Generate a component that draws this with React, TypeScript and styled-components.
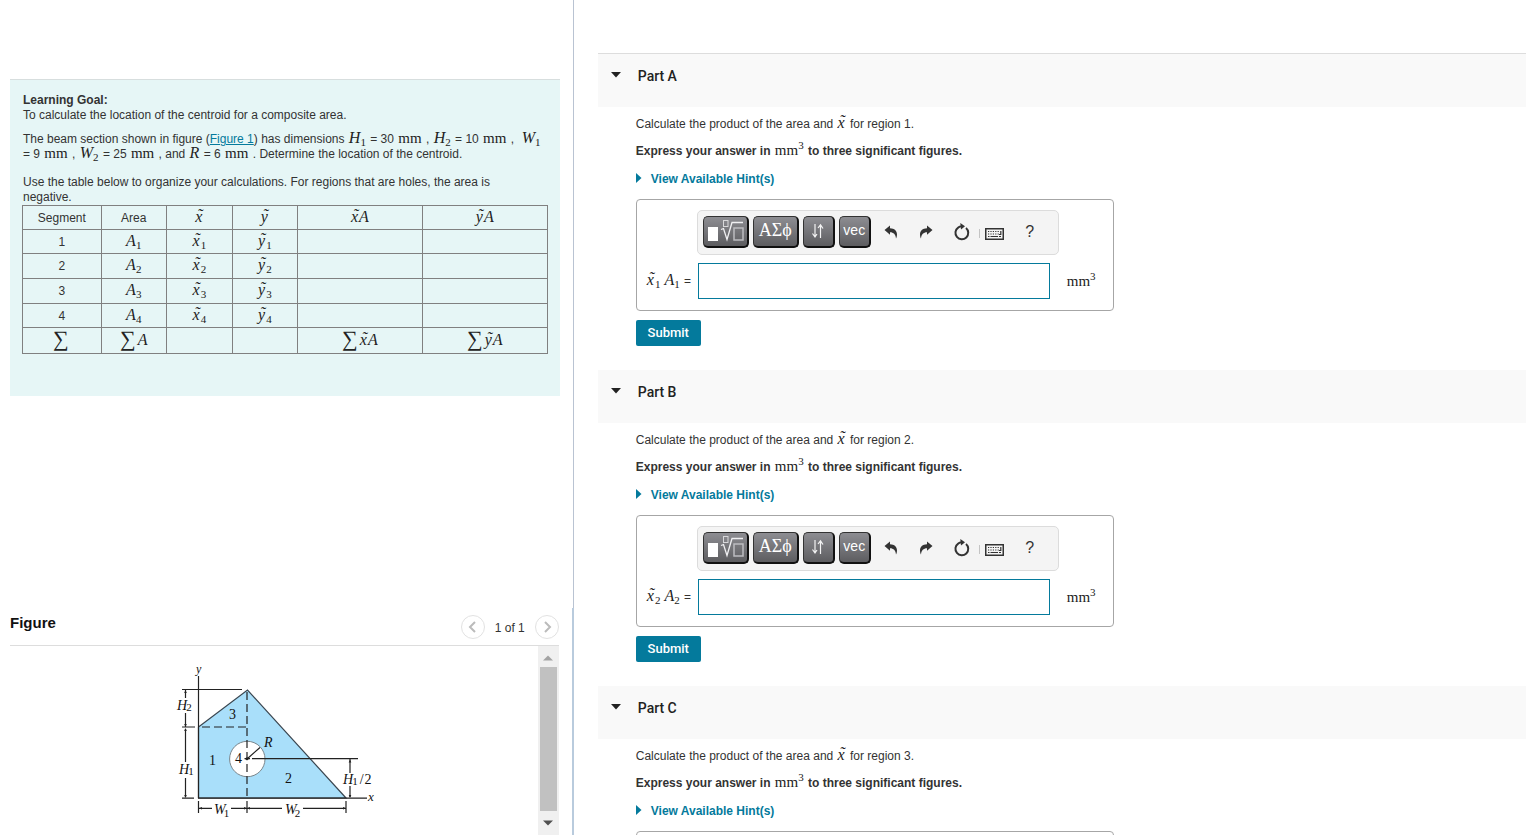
import React from "react";
import styled, { createGlobalStyle, css } from "styled-components";

const Global = createGlobalStyle`
  *, *::before, *::after { box-sizing: border-box; }
  body {
    margin: 0;
    background: #fff;
    color: #333;
    font: 12px/15px Arial, "Liberation Sans", sans-serif;
    overflow: hidden;
  }
  p, h2, h3 { margin: 0; }
  button, input { font-family: inherit; margin: 0; padding: 0; }
`;

const serif = `"Liberation Serif", "Times New Roman", serif`;

const Page = styled.div`
  display: grid;
  grid-template-columns: 37.6% 1fr;
  height: 100vh;
`;

/* ---------- math ---------- */

const Math = styled.span`
  margin: 0 1px;
  font-family: ${serif};
  font-size: 16px;
  line-height: 1px;
  font-weight: 400;
  color: #222;
  white-space: nowrap;
  sub, sup { font-size: 11px; line-height: 0; }
  sub { vertical-align: -3px; }
  sup { vertical-align: 6px; }
`;

const Unit = styled(Math)`
  font-size: 15px;
`;

const Sigma = styled.span`
  font-size: 22px;
  margin-right: 2px;
  vertical-align: -1px;
`;

const Tilde = styled.i`
  position: relative;
  margin-right: 1px;
  &::after {
    content: "˜";
    position: absolute;
    left: 2px;
    top: -2px;
    line-height: normal;
  }
`;

const X = () => <Tilde>x</Tilde>;
const Y = () => <Tilde>y</Tilde>;

/* ---------- left side ---------- */

const Aside = styled.aside`
  display: flex;
  flex-direction: column;
  min-height: 0;
`;

const Upper = styled.div`
  flex: 1;
  min-height: 0;
  padding: 79px 13px 0 10px;
  border-right: 1px solid #b9c3d2;
`;

const Goal = styled.section`
  padding: 13px 12px 42px;
  background: #e6f6f6;
  border-top: 1px solid #d7dede;
`;

const GoalTitle = styled.h2`
  font-size: 12px;
  line-height: 15px;
`;

const Para = styled.p<{ $gap: number; $inset?: number }>`
  padding-left: 1px;
  padding-right: ${(p) => p.$inset ?? 2}px;
  margin-top: ${(p) => p.$gap}px;
`;

const TextLink = styled.a`
  color: #047a9c;
  text-decoration: underline;
`;

const Table = styled.table`
  width: 100%;
  border-collapse: collapse;
  table-layout: fixed;
  th, td {
    height: 24px;
    padding: 0;
    border: 1px solid #808080;
    font-weight: 400;
    text-align: center;
    vertical-align: middle;
    line-height: 20px;
  }
  tr.tall td { height: 25px; }
  tr.total td { height: 26px; }
`;

const FigurePane = styled.section`
  height: 227px;
  display: flex;
  flex-direction: column;
  padding: 0 13px 0 10px;
  border-right: 2px solid #b9cbdd;
`;

const FigureHead = styled.header`
  height: 38px;
  display: flex;
  justify-content: space-between;
  border-bottom: 1px solid #ddd;
`;

const FigureTitle = styled.h2`
  font-size: 15px;
  line-height: 30px;
  color: #111;
`;

const Pager = styled.nav`
  display: flex;
  align-items: center;
  gap: 10px;
`;

const Round = styled.button`
  display: grid;
  place-items: center;
  width: 24px;
  height: 24px;
  border: 1px solid #e2e2e2;
  border-radius: 50%;
  background: #fff;
`;

const PageCount = styled.span`
  padding-top: 3px;
`;

const FigureBody = styled.div`
  flex: 1;
  display: flex;
  min-height: 0;
`;

const Drawing = styled.div`
  flex: 1;
  display: flex;
  justify-content: center;
  padding: 14px 0 0 2px;
`;

const ScrollTrack = styled.div`
  width: 21px;
  background: #f0f0f0;
  display: flex;
  flex-direction: column;
  align-items: center;
`;

const ScrollArrow = styled.span`
  height: 21px;
  padding-top: 2px;
  display: grid;
  place-items: center;
`;

const ScrollThumb = styled.div`
  width: 17px;
  height: 144px;
  background: #c1c1c1;
`;

const Chevron = ({ d }: { d: string }) => (
  <svg width="12" height="12" viewBox="0 0 12 12" fill="none" stroke="#bbb" strokeWidth="2">
    <path d={d} />
  </svg>
);

const BeamSection = () => (
  <svg width="210" height="165" viewBox="170 660 210 165" role="img" aria-label="Beam section">
    <path d="M198.5 727L247.5 690L346 798H198.5Z" fill="#a9dffa" stroke="#3a4650" strokeWidth="1.2" />
    <circle cx="247.3" cy="759" r="17.7" fill="#fff" stroke="#7b868c" />
    <g stroke="#222" fill="none" strokeWidth="1.2">
      <path d="M198.5 676V798" />
      <path d="M182 689.5H242M182 727H195M182 798.2H194M198 798.2H367" />
      <path d="M202 727H246" strokeDasharray="8 4" />
      <path d="M247 692V798" strokeDasharray="8 4" />
      <path d="M185.5 690V698M185.5 713V727M185.5 729V762M185.5 778V797" />
      <path d="M247 759L260 747.5M252 758.7H358M244.5 758.7H250" />
      <path d="M350 759V773M350 786V797" />
      <path d="M198.5 801V813M247 801V813M346 801V813" />
      <path d="M199 808.3H212M231 808.3H282M303 808.3H346" />
    </g>
    <g fill="#222">
      <path d="M185.5 690l-1.3 3h2.6zM185.5 727l-1.3-3h2.6zM185.5 728l-1.3 3h2.6zM185.5 798l-1.3-3h2.6z" />
      <path d="M350 759.5l-1.3 3h2.6zM350 798l-1.3-3h2.6z" />
      <path d="M199 808.3l3-1.3v2.6zM247 808.3l-3-1.3v2.6zM247 808.3l3-1.3v2.6zM346 808.3l-3-1.3v2.6z" />
      <circle cx="247" cy="758.7" r="1.5" />
    </g>
    <g fontFamily={serif} fontSize="14" fill="#111">
      <text x="196" y="673" fontStyle="italic" fontSize="12">y</text>
      <text x="368" y="801" fontStyle="italic" fontSize="13">x</text>
      <text x="177" y="710" fontStyle="italic">H<tspan fontStyle="normal" fontSize="11" dy="1" dx="-1">2</tspan></text>
      <text x="179" y="774" fontStyle="italic">H<tspan fontStyle="normal" fontSize="11" dy="1" dx="-1">1</tspan></text>
      <text x="343" y="784" fontStyle="italic">H<tspan fontStyle="normal" fontSize="11" dy="1" dx="-1">1</tspan><tspan fontStyle="normal" dy="-1" dx="2">/</tspan><tspan fontStyle="normal" dx="1">2</tspan></text>
      <text x="214" y="814" fontStyle="italic">W<tspan fontStyle="normal" fontSize="11" dy="3" dx="-2">1</tspan></text>
      <text x="285" y="814" fontStyle="italic">W<tspan fontStyle="normal" fontSize="11" dy="3" dx="-2">2</tspan></text>
      <text x="264" y="747" fontStyle="italic">R</text>
      <text x="209" y="765">1</text>
      <text x="285" y="783">2</text>
      <text x="229" y="719">3</text>
      <text x="235" y="763">4</text>
    </g>
  </svg>
);

/* ---------- right side ---------- */

const Main = styled.main`
  padding: 53px 0 0 24px;
  min-width: 0;
  overflow: hidden;
`;

const Parts = styled.div`
  border-top: 1px solid #ddd;
`;

const PartHead = styled.header`
  height: 53px;
  display: flex;
  align-items: flex-start;
  padding: 12px 13px;
  gap: 17px;
  background: #f9f9f9;
`;

const PartToggle = styled.button`
  width: 10px;
  height: 18px;
  border: 0;
  background: none;
  display: grid;
  place-items: center;
`;

const PartTitle = styled.h3`
  font-size: 14px;
  line-height: 20px;
  font-weight: 500;
  font-family: Roboto, Arial, sans-serif;
  color: #222;
`;

const PartBody = styled.div`
  padding: 10px 38px 24px;
`;

const Instruction = styled.p`
  margin-top: 12px;
  font-weight: 700;
`;

const Hints = styled.button`
  display: flex;
  align-items: center;
  gap: 9px;
  margin-top: 13px;
  border: 0;
  background: none;
  color: #047a9c;
  font-size: 12px;
  line-height: 15px;
  font-weight: 700;
  svg { margin-bottom: 3px; }
`;

const AnswerBox = styled.div`
  max-width: 478px;
  height: 112px;
  margin-top: 12px;
  padding: 10px;
  border: 1px solid #a6a6a6;
  border-radius: 4px;
`;

const Toolbar = styled.div`
  display: flex;
  align-items: center;
  width: 362px;
  height: 45px;
  margin-left: 50px;
  padding: 0 5px 2px;
  border: 1px solid #dcdcdc;
  border-radius: 5px;
  background: #f4f4f4;
`;

const DarkKeys = styled.div`
  display: flex;
  gap: 4px;
`;

const DarkKey = styled.button<{ $wide?: boolean; $serif?: boolean; $text?: boolean }>`
  display: grid;
  place-items: center;
  width: ${(p) => (p.$wide ? 46 : 32)}px;
  height: 32px;
  padding-bottom: ${(p) => (p.$text ? 3 : 0)}px;
  border: 1px solid #333;
  border-right: 2px solid #111;
  border-bottom: 2px solid #111;
  border-radius: 5px;
  background: linear-gradient(#8d8d92, #5d5d60);
  color: #fff;
  font-size: 14px;
  line-height: 16px;
  ${(p) =>
    p.$serif &&
    css`
      font-family: ${serif};
      font-size: 18px;
    `}
`;

const PlainKeys = styled.div`
  display: flex;
  align-items: center;
  margin-left: 12px;
`;

const PlainKey = styled.button<{ $width: number; $drop?: number }>`
  display: grid;
  place-items: center;
  width: ${(p) => p.$width}px;
  height: 32px;
  padding-top: ${(p) => p.$drop ?? 0}px;
  border: 0;
  background: none;
  color: #333;
  font-size: 16px;
`;

const Divider = styled.span`
  width: 1px;
  height: 9px;
  margin: 4px 0 0 10px;
  background: #c4c4c4;
`;

const AnswerRow = styled.div`
  display: flex;
  align-items: center;
  margin-top: 8px;
`;

const AnswerLabel = styled.label`
  width: 51px;
  margin-left: -1px;
  flex: none;
  white-space: nowrap;
`;

const AnswerInput = styled.input`
  width: 352px;
  height: 36px;
  margin-left: 1px;
  padding: 0 8px;
  border: 1px solid #047a9c;
  background: #fff;
  font-size: 16px;
`;

const AnswerUnit = styled(Unit)`
  margin: 0 0 4px 17px;
`;

const Submit = styled.button`
  display: block;
  width: 65px;
  height: 26px;
  margin-top: 9px;
  border: 0;
  border-radius: 2px;
  background: #047a9c;
  color: #fff;
  font: 500 13px/24px Roboto, Arial, sans-serif;
`;

const RootIcon = () => (
  <svg width="38" height="24" viewBox="0 0 38 24" fill="none">
    <rect x="2" y="8" width="10" height="14" fill="#fff" />
    <rect x="17.5" y="1.500" width="4.500" height="6" stroke="#d8d8da" />
    <path d="M15 10.500L17.500 9.500L21 20.500L26 3.500H37" stroke="#f0f0f2" strokeWidth="1.300" />
    <rect x="28" y="9" width="9" height="12" stroke="#bcbcc0" strokeWidth="1.500" />
  </svg>
);

const ArrowsIcon = () => (
  <svg width="14" height="16" viewBox="0 0 14 16" fill="none" stroke="#f4f4f4" strokeWidth="1.200">
    <path d="M4 1V14M1.500 10.500L4 14L6 11M9.500 15V2M7 5L9.500 1.800L12 5.500" />
  </svg>
);

const UndoIcon = () => (
  <svg width="14" height="14" viewBox="0 0 14 14" fill="#333">
    <path d="M0.500 5L6 0.500V3.200C10.500 3.200 13 6 13 9.500C13 11 12.600 12.500 12 13.500C11.700 9.500 9.500 7.300 6 7.300V9.800Z" />
  </svg>
);

const RedoIcon = () => (
  <svg width="14" height="14" viewBox="0 0 14 14" fill="#333">
    <path d="M13.500 5L8 0.500V3.200C3.500 3.200 1 6 1 9.500C1 11 1.400 12.500 2 13.500C2.300 9.500 4.500 7.300 8 7.300V9.800Z" />
  </svg>
);

const ResetIcon = () => (
  <svg width="18" height="18" viewBox="0 0 18 18" fill="none">
    <path d="M13 5A6.400 6.400 0 1 1 5.200 4.600Q6.500 3.500 9 3.300" stroke="#333" strokeWidth="2" />
    <path d="M7.300 0L12 3.300L8 6.500Z" fill="#333" />
  </svg>
);

const KeyboardIcon = () => (
  <svg width="19" height="12" viewBox="0 0 19 12" fill="none" stroke="#333">
    <rect x="0.750" y="0.750" width="17.500" height="10.500" strokeWidth="1.500" />
    <path d="M3 3.500H14" strokeDasharray="1.200 1.200" strokeWidth="1.200" />
    <path d="M3 6H14" strokeDasharray="1.200 1.200" strokeWidth="1.200" />
    <path d="M3 8.500H4.500M5.500 8.500H13M14 8.500H16M15.800 3V6.500H14" strokeWidth="1.200" />
  </svg>
);

const Part = ({ letter, region }: { letter: string; region: number }) => {
  const id = `answer-${letter}`;
  return (
    <section>
      <PartHead>
        <PartToggle aria-label={`Toggle part ${letter}`}>
          <svg width="10" height="6" viewBox="0 0 10 6">
            <path d="M0 0H10L5 5.500Z" fill="#222" />
          </svg>
        </PartToggle>
        <PartTitle>Part {letter}</PartTitle>
      </PartHead>
      <PartBody>
        <p>
          Calculate the product of the area and <Math><X /></Math> for region {region}.
        </p>
        <Instruction>
          Express your answer in <Unit>mm<sup>3</sup></Unit> to three significant figures.
        </Instruction>
        <Hints>
          <svg width="6" height="10" viewBox="0 0 6 10">
            <path d="M0 0L5.500 5L0 10Z" fill="#047a9c" />
          </svg>
          View Available Hint(s)
        </Hints>
        <AnswerBox>
          <Toolbar>
            <DarkKeys>
              <DarkKey $wide aria-label="Templates"><RootIcon /></DarkKey>
              <DarkKey $wide $serif $text>ΑΣϕ</DarkKey>
              <DarkKey aria-label="Arrows"><ArrowsIcon /></DarkKey>
              <DarkKey $text>vec</DarkKey>
            </DarkKeys>
            <PlainKeys>
              <PlainKey $width={16} aria-label="Undo"><UndoIcon /></PlainKey>
              <PlainKey $width={54} aria-label="Redo"><RedoIcon /></PlainKey>
              <PlainKey $width={16} aria-label="Reset"><ResetIcon /></PlainKey>
              <Divider />
              <PlainKey $width={30} $drop={4} aria-label="Keyboard"><KeyboardIcon /></PlainKey>
              <PlainKey $width={40}>?</PlainKey>
            </PlainKeys>
          </Toolbar>
          <AnswerRow>
            <AnswerLabel htmlFor={id}>
              <Math><X /><sub>{region}</sub> <i>A</i><sub>{region}</sub></Math> =
            </AnswerLabel>
            <AnswerInput id={id} type="text" />
            <AnswerUnit>mm<sup>3</sup></AnswerUnit>
          </AnswerRow>
        </AnswerBox>
        <Submit>Submit</Submit>
      </PartBody>
    </section>
  );
};

export default function App() {
  return (
    <>
      <Global />
      <Page>
        <Aside>
          <Upper>
            <Goal>
              <Para as="div" $gap={0}><GoalTitle>Learning Goal:</GoalTitle></Para>
              <Para $gap={0}>To calculate the location of the centroid for a composite area.</Para>
              <Para $gap={9}>
                The beam section shown in figure (<TextLink href="#figure">Figure 1</TextLink>) has dimensions{" "}
                <Math><i>H</i><sub>1</sub></Math> = 30 <Unit>mm</Unit> , <Math><i>H</i><sub>2</sub></Math> = 10{" "}
                <Unit>mm</Unit> ,{"\u00a0 "}<Math><i>W</i><sub>1</sub></Math> = 9 <Unit>mm</Unit> ,{" "}
                <Math><i>W</i><sub>2</sub></Math> = 25 <Unit>mm</Unit> , and <Math><i>R</i></Math> = 6{" "}
                <Unit>mm</Unit> . Determine the location of the centroid.
              </Para>
              <Para $gap={13} $inset={24}>
                Use the table below to organize your calculations. For regions that are holes, the area is negative.
              </Para>
              <Table>
                <colgroup>
                  <col style={{ width: "15%" }} />
                  <col style={{ width: "12.4%" }} />
                  <col style={{ width: "12.6%" }} />
                  <col style={{ width: "12.4%" }} />
                  <col />
                  <col />
                </colgroup>
                <thead>
                  <tr>
                    <th>Segment</th>
                    <th>Area</th>
                    <th><Math><X /></Math></th>
                    <th><Math><Y /></Math></th>
                    <th><Math><X /><i>A</i></Math></th>
                    <th><Math><Y /><i>A</i></Math></th>
                  </tr>
                </thead>
                <tbody>
                  {[1, 2, 3, 4].map((n) => (
                    <tr key={n} className={n === 2 || n === 3 ? "tall" : undefined}>
                      <td>{n}</td>
                      <td><Math><i>A</i><sub>{n}</sub></Math></td>
                      <td><Math><X /><sub>{n}</sub></Math></td>
                      <td><Math><Y /><sub>{n}</sub></Math></td>
                      <td />
                      <td />
                    </tr>
                  ))}
                  <tr className="total">
                    <td><Math><Sigma>∑</Sigma></Math></td>
                    <td><Math><Sigma>∑</Sigma><i>A</i></Math></td>
                    <td />
                    <td />
                    <td><Math><Sigma>∑</Sigma><X /><i>A</i></Math></td>
                    <td><Math><Sigma>∑</Sigma><Y /><i>A</i></Math></td>
                  </tr>
                </tbody>
              </Table>
            </Goal>
          </Upper>
          <FigurePane id="figure">
            <FigureHead>
              <FigureTitle>Figure</FigureTitle>
              <Pager aria-label="Figures">
                <Round aria-label="Previous figure"><Chevron d="M8 1L3 6L8 11" /></Round>
                <PageCount>1 of 1</PageCount>
                <Round aria-label="Next figure"><Chevron d="M4 1L9 6L4 11" /></Round>
              </Pager>
            </FigureHead>
            <FigureBody>
              <Drawing><BeamSection /></Drawing>
              <ScrollTrack>
                <ScrollArrow>
                  <svg width="10" height="6" viewBox="0 0 10 6"><path d="M0 5.500L5 0.500L10 5.500Z" fill="#a3a3a3" /></svg>
                </ScrollArrow>
                <ScrollThumb />
                <ScrollArrow>
                  <svg width="10" height="6" viewBox="0 0 10 6"><path d="M0 0.500L5 5.500L10 0.500Z" fill="#505050" /></svg>
                </ScrollArrow>
              </ScrollTrack>
            </FigureBody>
          </FigurePane>
        </Aside>
        <Main>
          <Parts>
            <Part letter="A" region={1} />
            <Part letter="B" region={2} />
            <Part letter="C" region={3} />
          </Parts>
        </Main>
      </Page>
    </>
  );
}
